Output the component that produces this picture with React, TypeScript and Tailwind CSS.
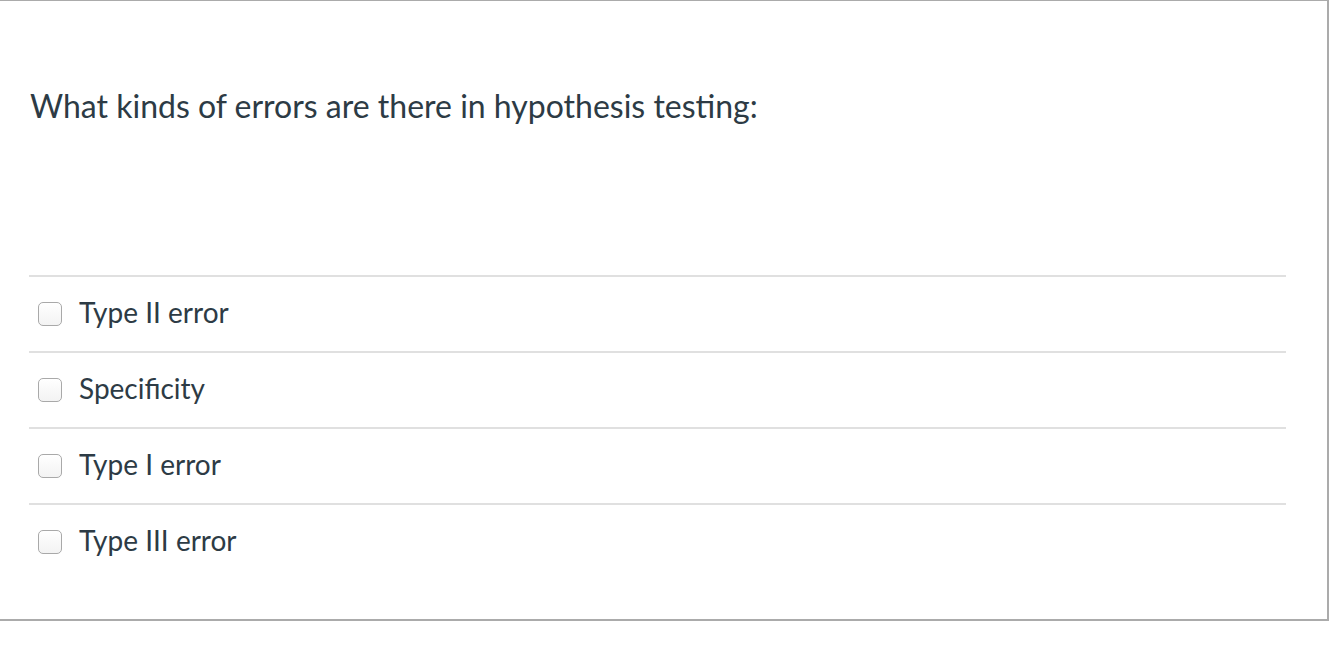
const answers = ["Type II error", "Specificity", "Type I error", "Type III error"];

export default function App() {
  return (
    <div className="w-[1340px] h-[663px] bg-white" style={{ fontFamily: "Lato, 'Noto Sans', sans-serif" }}>
      <div className="w-[1329px] h-[621px] border-t border-r-2 border-b-2 border-[#ababab] bg-white pl-[29px] pr-[41px] pt-[86px] text-[#2d3b45]">
        <div className="text-[32px] leading-[38px] pl-px">What kinds of errors are there in hypothesis testing:</div>

        <div className="mt-[150px]">
          {answers.map((a) => (
            <div key={a} className="flex items-center h-[76px] border-t-2 border-[#e0e0e0]">
              <span className="ml-[9px] w-[24px] h-[24px] rounded-[5px] border border-[#a9a9a9] bg-gradient-to-b from-white to-[#f3f3f3] shrink-0" />
              <label className="ml-[17px] text-[28px] leading-[34px] pb-[4px]">{a}</label>
            </div>
          ))}
        </div>
      </div>
    </div>
  );
}
